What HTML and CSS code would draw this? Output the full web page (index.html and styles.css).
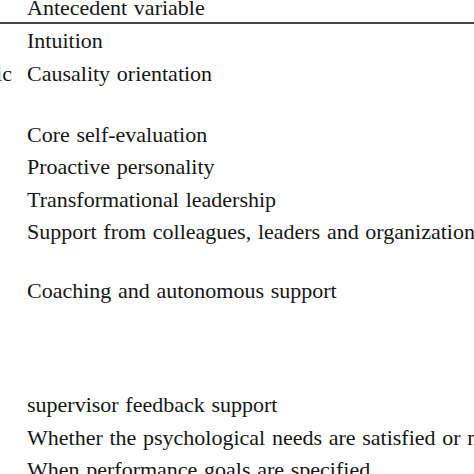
FILE: index.html
```html
<!DOCTYPE html>
<html>
<head>
<meta charset="utf-8">
<link rel="stylesheet" href="styles.css">
</head>
<body>
<div class="table">
  <div class="row head"><div class="c1"></div><div class="c2">Antecedent variable</div></div>
  <div class="body">
    <div class="row first"><div class="c1"></div><div class="c2">Intuition</div></div>
    <div class="row"><div class="c1">Intrinsic</div><div class="c2">Causality orientation</div></div>
    <div class="row gap1"><div class="c1"></div><div class="c2">Core self-evaluation</div></div>
    <div class="row"><div class="c1"></div><div class="c2">Proactive personality</div></div>
    <div class="row"><div class="c1"></div><div class="c2">Transformational leadership</div></div>
    <div class="row"><div class="c1"></div><div class="c2">Support from colleagues, leaders and organization</div></div>
    <div class="row gap2"><div class="c1"></div><div class="c2">Coaching and autonomous support</div></div>
    <div class="row gap3"><div class="c1"></div><div class="c2">supervisor feedback support</div></div>
    <div class="row"><div class="c1"></div><div class="c2">Whether the psychological needs are satisfied or not</div></div>
    <div class="row"><div class="c1"></div><div class="c2">When performance goals are specified</div></div>
  </div>
</div>
</body>
</html>
```
FILE: styles.css
```css
html, body {
  margin: 0;
  padding: 0;
  background: #ffffff;
  overflow: hidden;
  width: 474px;
  height: 474px;
}
.table {
  margin-left: -118px;
  width: 700px;
  font-family: "Liberation Serif", "Times New Roman", serif;
  font-size: 22px;
  color: #161616;
}
.row {
  display: grid;
  grid-template-columns: 130px 1fr;
  column-gap: 15px;
  line-height: 32.5px;
  white-space: nowrap;
  word-spacing: 1.2px;
}
.c1 {
  text-align: right;
}
.head {
  line-height: 24px;
  margin-top: -4px;
  padding-bottom: 2px;
  border-bottom: 2px solid #464646;
}
.first {
  margin-top: 1.3px;
}
.gap1 {
  margin-top: 28.5px;
}
.gap2 {
  margin-top: 26.5px;
}
.gap3 {
  margin-top: 81.5px;
}
```
